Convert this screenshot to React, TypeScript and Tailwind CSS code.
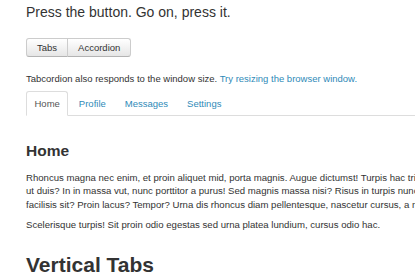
export default function App() {
  const tabs = ["Home", "Profile", "Messages", "Settings"];
  return (
    <div className="w-[415px] h-[280px] overflow-hidden bg-white font-['Liberation_Sans',Arial,sans-serif] text-[#333]">
      <div className="pl-[26px] w-[700px]">
        <h3 className="pt-[4px] text-[14px] leading-[17px] text-[#333]">
          Press the button. Go on, press it.
        </h3>
        <div className="mt-[17px] inline-flex">
          <button className="h-[19px] px-[10px] text-[9.5px] leading-[17px] text-[#333] border border-[#ccc] border-b-[#b3b3b3] rounded-l-[3px] bg-gradient-to-b from-white to-[#e6e6e6]">
            Tabs
          </button>
          <button className="h-[19px] px-[10px] -ml-px text-[9.5px] leading-[17px] text-[#333] border border-[#ccc] border-b-[#b3b3b3] rounded-r-[3px] bg-gradient-to-b from-white to-[#e6e6e6]">
            Accordion
          </button>
        </div>
        <p className="mt-[14px] text-[9.5px] leading-[13px] text-[#333] whitespace-nowrap">
          Tabcordion also responds to the window size.{" "}
          <a className="text-[#2f8ab8]">Try resizing the browser window.</a>
        </p>
        <ul className="mt-[6px] flex border-b border-[#ddd]">
          {tabs.map((t, i) => (
            <li key={t} className="-mb-px mr-[2px]">
              <a
                className={
                  i === 0
                    ? "block px-[7.5px] py-[5px] text-[9.5px] leading-[13px] text-[#555] bg-white border border-[#ddd] border-b-transparent rounded-t-[3px]"
                    : "block px-[7.5px] py-[5px] text-[9.5px] leading-[13px] text-[#2f8ab8] border border-transparent rounded-t-[3px]"
                }
              >
                {t}
              </a>
            </li>
          ))}
        </ul>
        <h4 className="mt-[26px] text-[15.5px] leading-[17px] font-bold text-[#333]">Home</h4>
        <p className="mt-[12px] text-[9.6px] leading-[13.3px] text-[#333] whitespace-nowrap">
          Rhoncus magna nec enim, et proin aliquet mid, porta magnis. Augue dictumst! Turpis hac tristique, nunc
          <br />
          ut duis? In in massa vut, nunc porttitor a purus! Sed magnis massa nisi? Risus in turpis nunc, tincidunt
          <br />
          facilisis sit? Proin lacus? Tempor? Urna dis rhoncus diam pellentesque, nascetur cursus, a mauris
        </p>
        <p className="mt-[7px] text-[9.6px] leading-[13.3px] text-[#333] whitespace-nowrap">
          Scelerisque turpis! Sit proin odio egestas sed urna platea lundium, cursus odio hac.
        </p>
        <h2 className="mt-[22px] text-[21px] leading-[24px] font-bold text-[#333]">Vertical Tabs</h2>
      </div>
    </div>
  );
}
